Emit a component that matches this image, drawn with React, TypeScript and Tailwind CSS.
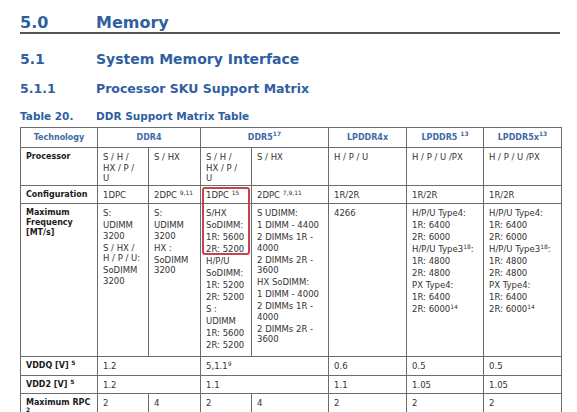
import React from "react";

const font = { fontFamily: '"DejaVu Sans", Verdana, sans-serif' };

function P({ children }: { children: React.ReactNode }) {
  return <div className="leading-[10.5px] mb-[1.5px] whitespace-nowrap">{children}</div>;
}

function Sup({ children }: { children: React.ReactNode }) {
  return <sup className="text-[6px] top-[-3.5px]">{children}</sup>;
}

const td = "align-top border border-[#6d6d6d] px-[5px] pt-[4px] text-[8.5px] text-[#333]";
const th = "align-top border border-[#6d6d6d] px-[5px] pt-[4px] text-[8px] font-bold text-[#1a1a1a]";
const hd = "align-middle text-center border border-[#6d6d6d] text-[8px] font-bold text-[#3f6aa6]";

export default function App() {
  return (
    <div className="w-[577px] h-[412px] overflow-hidden bg-white pl-[20px] pt-[15px]" style={font}>
      <div className="flex text-[16px] leading-[16px] font-bold text-[#2f5f9f]">
        <span className="w-[76px]">5.0</span>
        <span>Memory</span>
      </div>
      <div className="mt-[1px] h-[2px] w-[540px] bg-[#555]" />
      <div className="mt-[18px] flex text-[14px] leading-[14px] font-bold text-[#2f5f9f]">
        <span className="w-[76px]">5.1</span>
        <span>System Memory Interface</span>
      </div>
      <div className="mt-[17px] flex text-[12.5px] leading-[12.5px] font-bold text-[#2f5f9f]">
        <span className="w-[76px]">5.1.1</span>
        <span>Processor SKU Support Matrix</span>
      </div>
      <div className="mt-[15px] flex text-[10.5px] leading-[10.5px] font-bold text-[#2f5f9f]">
        <span className="w-[76px]">Table 20.</span>
        <span>DDR Support Matrix Table</span>
      </div>
      <div className="relative mt-[6px] w-[541px]">
        <table className="table-fixed border-collapse w-[541px]">
          <colgroup>
            <col className="w-[77px]" />
            <col className="w-[51px]" />
            <col className="w-[52px]" />
            <col className="w-[51px]" />
            <col className="w-[77px]" />
            <col className="w-[78px]" />
            <col className="w-[77px]" />
            <col className="w-[78px]" />
          </colgroup>
          <tbody>
            <tr className="h-[20px]">
              <td className={hd}>Technology</td>
              <td className={hd} colSpan={2}>DDR4</td>
              <td className={hd} colSpan={2}>DDR5<Sup>17</Sup></td>
              <td className={hd}>LPDDR4x</td>
              <td className={hd}>LPDDR5 <Sup>13</Sup></td>
              <td className={hd}>LPDDR5x<Sup>13</Sup></td>
            </tr>
            <tr className="h-[38px]">
              <td className={th}><P>Processor</P></td>
              <td className={td}><P>S / H /<br />HX / P /<br />U</P></td>
              <td className={td}><P>S / HX</P></td>
              <td className={td}><P>S / H /<br />HX / P /<br />U</P></td>
              <td className={td}><P>S / HX</P></td>
              <td className={td}><P>H / P / U</P></td>
              <td className={td}><P>H / P / U /PX</P></td>
              <td className={td}><P>H / P / U /PX</P></td>
            </tr>
            <tr className="h-[18px]">
              <td className={th}><P>Configuration</P></td>
              <td className={td}><P>1DPC</P></td>
              <td className={td}><P>2DPC <Sup>9,11</Sup></P></td>
              <td className={td}><P>1DPC <Sup>15</Sup></P></td>
              <td className={td}><P>2DPC <Sup>7,9,11</Sup></P></td>
              <td className={td}><P>1R/2R</P></td>
              <td className={td}><P>1R/2R</P></td>
              <td className={td}><P>1R/2R</P></td>
            </tr>
            <tr className="h-[153px]">
              <td className={th}>
                <div className="leading-[10px]">Maximum<br />Frequency<br />[MT/s]</div>
              </td>
              <td className={td}>
                <P>S:</P>
                <P>UDIMM<br />3200</P>
                <P>S / HX /<br />H / P / U:</P>
                <P>SoDIMM<br />3200</P>
              </td>
              <td className={td}>
                <P>S:</P>
                <P>UDIMM<br />3200</P>
                <P>HX :</P>
                <P>SoDIMM<br />3200</P>
              </td>
              <td className={td}>
                <P>S/HX</P>
                <P>SoDIMM:</P>
                <P>1R: 5600</P>
                <P>2R: 5200</P>
                <P>H/P/U</P>
                <P>SoDIMM:</P>
                <P>1R: 5200</P>
                <P>2R: 5200</P>
                <P>S :</P>
                <P>UDIMM</P>
                <P>1R: 5600</P>
                <P>2R: 5200</P>
              </td>
              <td className={td}>
                <P>S UDIMM:</P>
                <P>1 DIMM - 4400</P>
                <P>2 DIMMs 1R -<br />4000</P>
                <P>2 DIMMs 2R -<br />3600</P>
                <P>HX SoDIMM:</P>
                <P>1 DIMM - 4000</P>
                <P>2 DIMMs 1R -<br />4000</P>
                <P>2 DIMMs 2R -<br />3600</P>
              </td>
              <td className={td}><P>4266</P></td>
              <td className={td}>
                <P>H/P/U Type4:</P>
                <P>1R: 6400</P>
                <P>2R: 6000</P>
                <P>H/P/U Type3<Sup>18</Sup>:</P>
                <P>1R: 4800</P>
                <P>2R: 4800</P>
                <P>PX Type4:</P>
                <P>1R: 6400</P>
                <P>2R: 6000<Sup>14</Sup></P>
              </td>
              <td className={td}>
                <P>H/P/U Type4:</P>
                <P>1R: 6400</P>
                <P>2R: 6000</P>
                <P>H/P/U Type3<Sup>18</Sup>:</P>
                <P>1R: 4800</P>
                <P>2R: 4800</P>
                <P>PX Type4:</P>
                <P>1R: 6400</P>
                <P>2R: 6000<Sup>14</Sup></P>
              </td>
            </tr>
            <tr className="h-[19px]">
              <td className={th}><P>VDDQ [V] <Sup>5</Sup></P></td>
              <td className={td} colSpan={2}><P>1.2</P></td>
              <td className={td} colSpan={2}><P>5,1.1<Sup>9</Sup></P></td>
              <td className={td}><P>0.6</P></td>
              <td className={td}><P>0.5</P></td>
              <td className={td}><P>0.5</P></td>
            </tr>
            <tr className="h-[18px]">
              <td className={th}><P>VDD2 [V] <Sup>5</Sup></P></td>
              <td className={td} colSpan={2}><P>1.2</P></td>
              <td className={td} colSpan={2}><P>1.1</P></td>
              <td className={td}><P>1.1</P></td>
              <td className={td}><P>1.05</P></td>
              <td className={td}><P>1.05</P></td>
            </tr>
            <tr className="h-[34px]">
              <td className={th}><P>Maximum RPC<br /><Sup>2</Sup></P></td>
              <td className={td}><P>2</P></td>
              <td className={td}><P>4</P></td>
              <td className={td}><P>2</P></td>
              <td className={td}><P>4</P></td>
              <td className={td}><P>2</P></td>
              <td className={td}><P>2</P></td>
              <td className={td}><P>2</P></td>
            </tr>
          </tbody>
        </table>
        <div className="absolute left-[182px] top-[60px] w-[48px] h-[68px] border-[2px] border-[#c6434d] rounded-[3px]" />
      </div>
    </div>
  );
}
